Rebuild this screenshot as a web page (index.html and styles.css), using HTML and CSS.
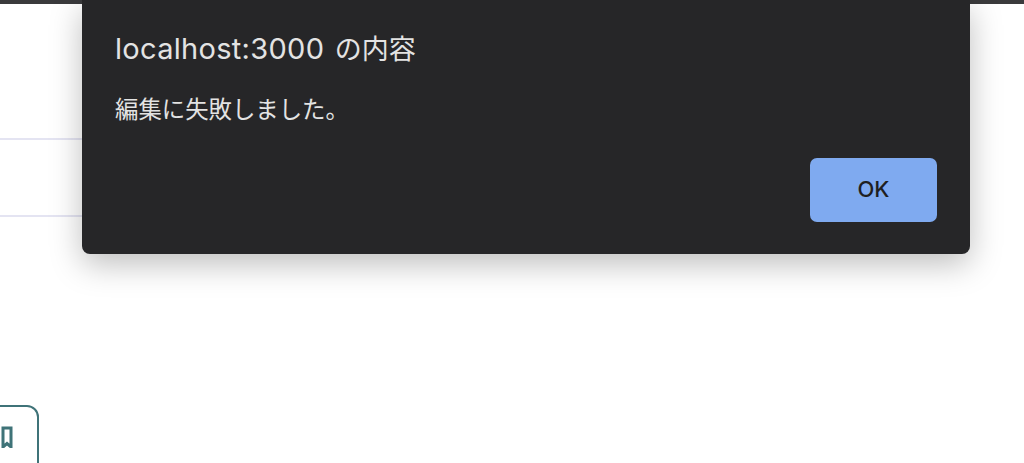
FILE: index.html
```html
<!DOCTYPE html>
<html lang="ja">
<head>
    <meta charset="UTF-8">
    <meta name="viewport" content="width=device-width, initial-scale=1.0">
    <title>localhost:3000</title>
    <link rel="stylesheet" href="styles.css">
</head>
<body>
    <div class="topbar"></div>
    <div class="page">
        <div class="list">
            <div class="list__row"></div>
        </div>
        <button class="save-btn" type="button">
            <svg class="save-btn__icon" width="12" height="22" viewBox="0 0 12 22">
                <path d="M2 21V2h8v19L6 17.5 2 21z" fill="none" stroke="#3f7378" stroke-width="3"/>
            </svg>
        </button>
    </div>

    <div class="dialog">
        <div class="dialog__title"><span class="dialog__host">localhost:3000</span> の内容</div>
        <div class="dialog__message">編集に失敗しました。</div>
        <div class="dialog__actions">
            <button class="dialog__ok" type="button">OK</button>
        </div>
    </div>
</body>
</html>
```

FILE: styles.css
```css
* { box-sizing: border-box; }
html, body { height: 100%; }
body { margin: 0; background: #fff; overflow: hidden; font-family: "Inter", "Noto Sans CJK JP", sans-serif; }

.topbar { height: 4px; background: #3a3a3c; }

.page { padding-top: 134px; }
.list { width: 400px; border-top: 2px solid #e4e4f2; }
.list__row { height: 77px; border-bottom: 2px solid #e4e4f2; }

.save-btn { display: flex; justify-content: flex-end; align-items: flex-start; width: 60px; height: 80px; margin: 188px 0 0 -21px; padding: 19px 24px 0 0; background: #fff; border: 2px solid #3f7378; border-radius: 12px; }
.save-btn__icon { display: block; }

.dialog { position: absolute; top: 0; left: 82px; width: 888px; height: 254px; padding: 32px 33px 0; background: #262628; border-radius: 0 0 8px 8px; box-shadow: 0 10px 32px rgba(0, 0, 0, .26); color: #e3e3e3; }
.dialog__title { font-size: 27px; line-height: 34px; }
.dialog__host { margin-right: 3px; font-size: 29px; letter-spacing: .3px; }
.dialog__message { margin-top: 27px; font-size: 23.4px; line-height: 32px; }
.dialog__actions { display: flex; justify-content: flex-end; margin-top: 32px; }
.dialog__ok { width: 127px; height: 64px; padding: 0 0 2px; background: #7faaf0; border: none; border-radius: 7px; color: #1f1f21; font-family: inherit; font-size: 22px; font-weight: 500; }
```
